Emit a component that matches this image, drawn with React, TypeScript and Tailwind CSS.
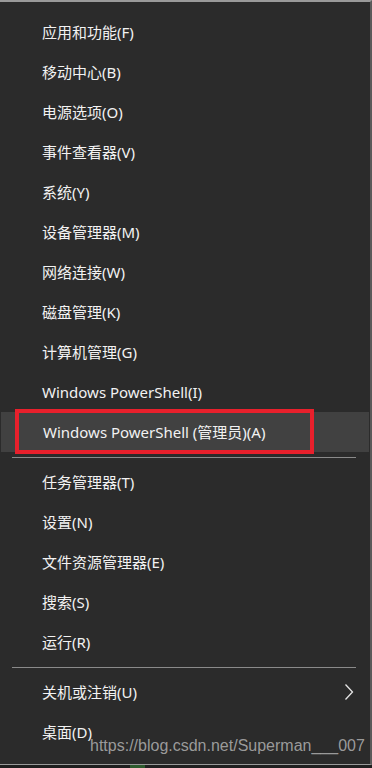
import React from "react";

const group1 = [
  "应用和功能(F)",
  "移动中心(B)",
  "电源选项(O)",
  "事件查看器(V)",
  "系统(Y)",
  "设备管理器(M)",
  "网络连接(W)",
  "磁盘管理(K)",
  "计算机管理(G)",
  "Windows PowerShell(I)",
];
const group2 = ["任务管理器(T)", "设置(N)", "文件资源管理器(E)", "搜索(S)", "运行(R)"];

function Item({ label, children }: { label: string; children?: React.ReactNode }) {
  return (
    <div className="h-10 flex items-center pl-[42px] pr-4 text-[15px] text-[#f2f2f2] leading-none">
      <span className="flex-1">{label}</span>
      {children}
    </div>
  );
}

function Sep() {
  return (
    <div className="h-[10px] flex items-center pl-3 pr-[14px]">
      <div className="h-px w-full bg-[#8a8a8a]" />
    </div>
  );
}

export default function App() {
  return (
    <div
      className="w-[372px] h-[768px] bg-[#1c1c1c] flex flex-col overflow-hidden"
      style={{ fontFamily: '"Noto Sans", "Noto Sans CJK SC", sans-serif' }}
    >
      <div className="relative h-[765px] bg-[#2b2b2b] border-t-2 border-r-2 border-b border-[#9a9a9a] border-r-[#5a5a5a] flex flex-col pt-[10px]">
        {group1.map((l) => (
          <Item key={l} label={l} />
        ))}
        <div className="relative h-10 flex items-center pl-[42px] ml-[1px] mr-[1px] bg-[#414141] text-[15px] text-[#f2f2f2] leading-none">
          <span>Windows PowerShell (管理员)(A)</span>
          <div className="absolute left-[14px] top-[-3px] w-[299px] h-[45px] border-[4px] border-[#e8202c]" />
        </div>
        <Sep />
        {group2.map((l) => (
          <Item key={l} label={l} />
        ))}
        <Sep />
        <Item label="关机或注销(U)">
          <svg width="10" height="18" viewBox="0 0 10 18" className="mr-0">
            <path d="M1.5 1.5 L8.5 9 L1.5 16.5" fill="none" stroke="#e6e6e6" strokeWidth="1.3" />
          </svg>
        </Item>
        <Item label="桌面(D)" />
        <div
          className="absolute left-[90px] top-[736px] text-[16px] leading-none text-[#a9a9a9]/90"
          style={{ fontFamily: '"Liberation Sans", Arial, sans-serif' }}
        >
          https://blog.csdn.net/Superman___007
        </div>
      </div>
      <div className="flex-1 flex">
        <div className="w-[130px] bg-[#1e1e1e]" />
        <div className="w-[15px] bg-[#2d5a2d]" />
        <div className="flex-1 bg-[#202020]" />
      </div>
    </div>
  );
}
